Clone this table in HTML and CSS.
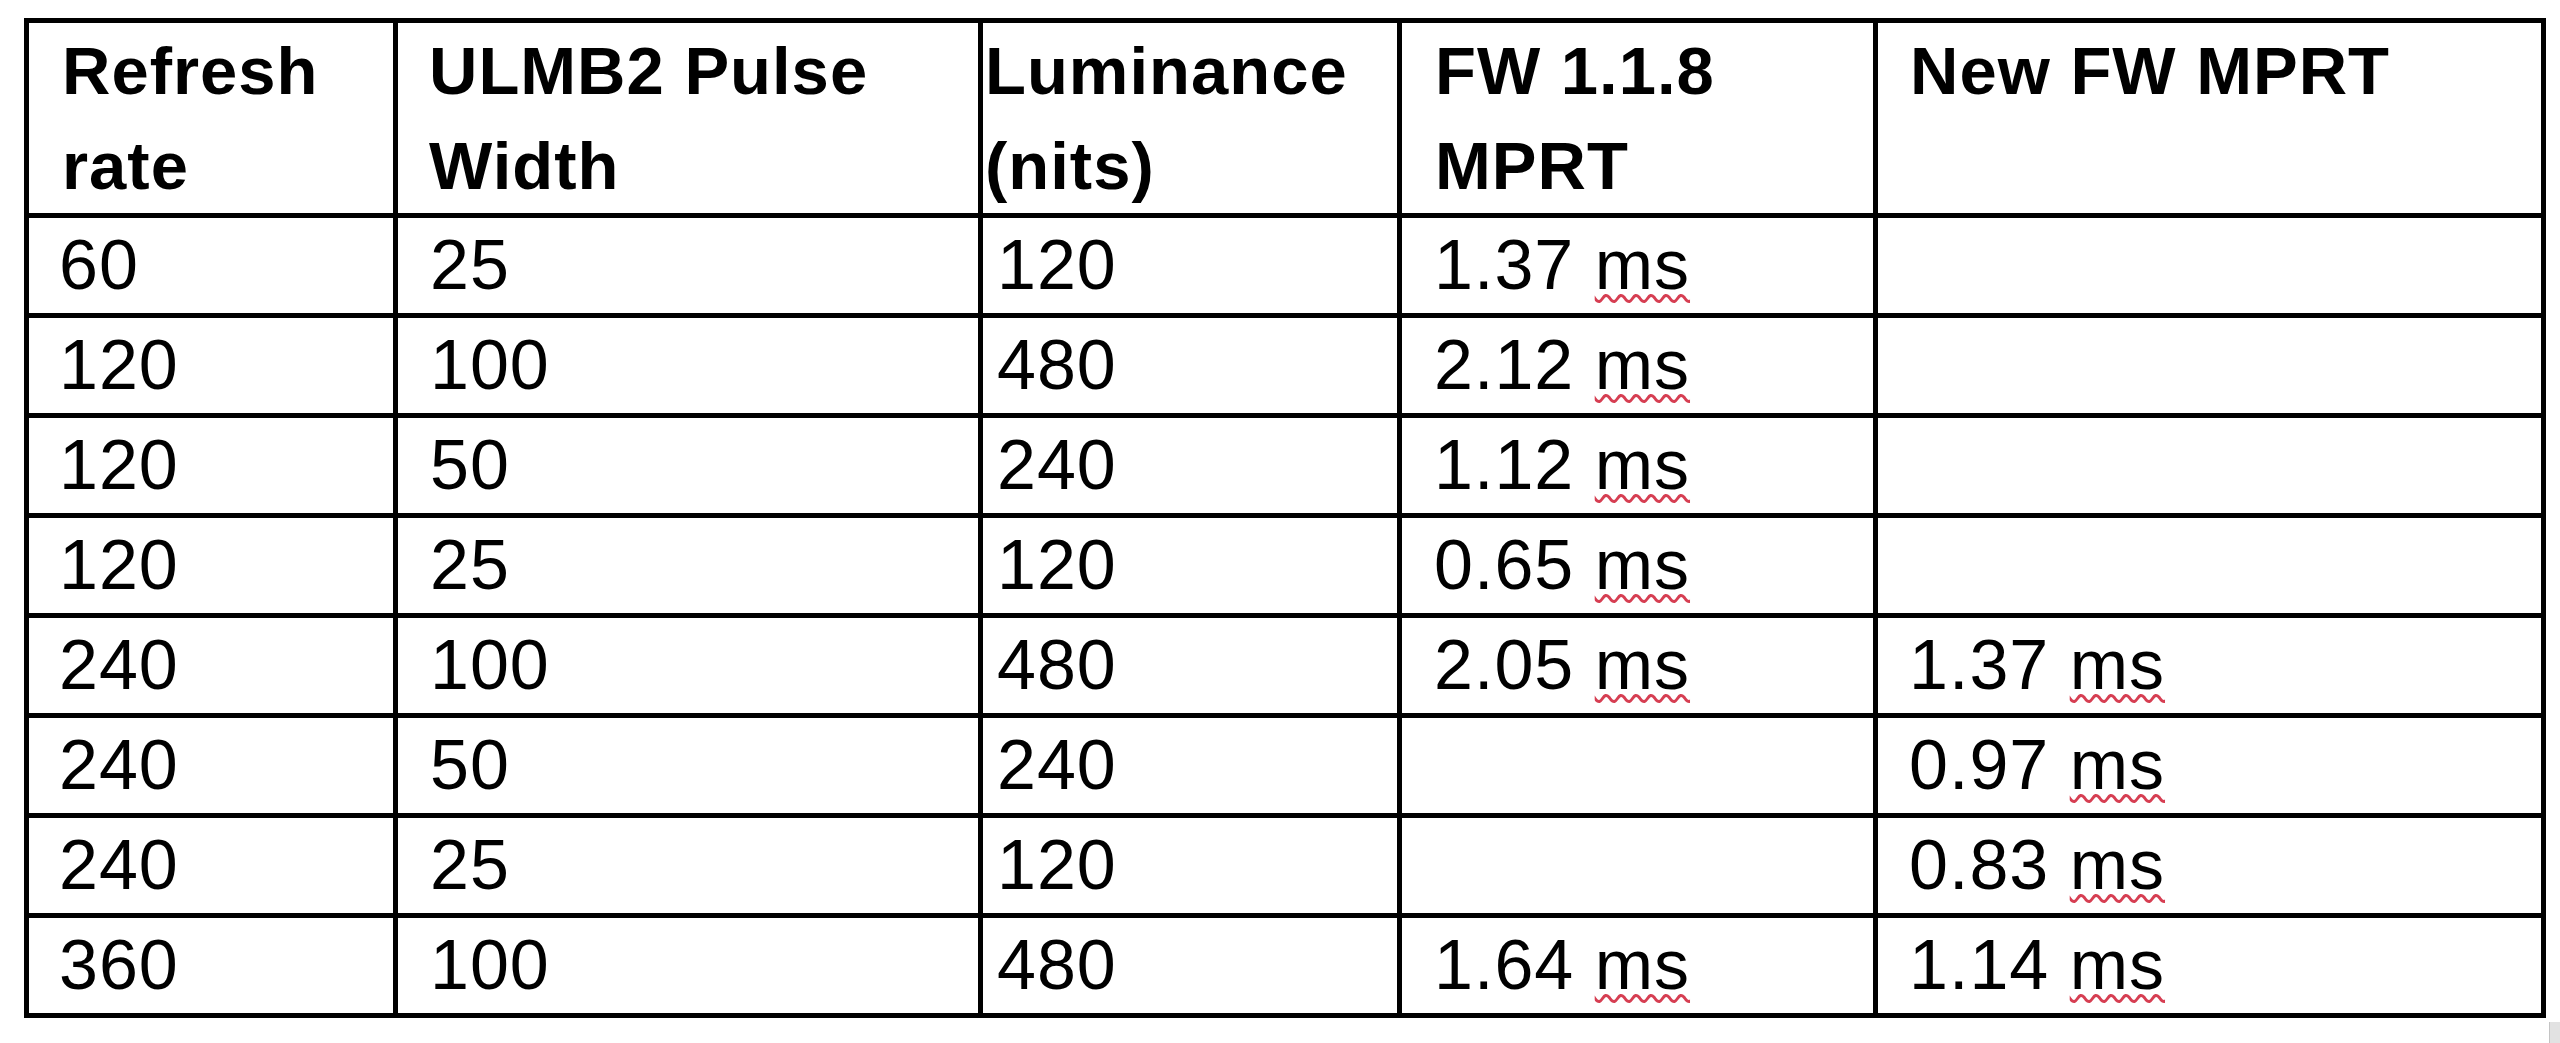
FILE: index.html
```html
<!DOCTYPE html>
<html lang="en">
<head>
<meta charset="utf-8">
<title>ULMB2 MPRT table</title>
<link rel="stylesheet" href="styles.css">
</head>
<body>
<main class="page">
  <table class="grid">
    <colgroup>
      <col class="c1"><col class="c2"><col class="c3"><col class="c4"><col class="c5">
    </colgroup>
    <thead>
      <tr>
        <th class="p1">Refresh<br>rate</th>
        <th class="p2">ULMB2 Pulse<br>Width</th>
        <th class="p3h">Luminance<br>(nits)</th>
        <th class="p4">FW 1.1.8<br>MPRT</th>
        <th class="p5">New FW MPRT</th>
      </tr>
    </thead>
    <tbody>
      <tr><td class="p1">60</td><td class="p2">25</td><td class="p3">120</td><td class="p4">1.37 <span class="sp">ms</span></td><td class="p5"></td></tr>
      <tr><td class="p1">120</td><td class="p2">100</td><td class="p3">480</td><td class="p4">2.12 <span class="sp">ms</span></td><td class="p5"></td></tr>
      <tr><td class="p1">120</td><td class="p2">50</td><td class="p3">240</td><td class="p4">1.12 <span class="sp">ms</span></td><td class="p5"></td></tr>
      <tr><td class="p1">120</td><td class="p2">25</td><td class="p3">120</td><td class="p4">0.65 <span class="sp">ms</span></td><td class="p5"></td></tr>
      <tr><td class="p1">240</td><td class="p2">100</td><td class="p3">480</td><td class="p4">2.05 <span class="sp">ms</span></td><td class="p5">1.37 <span class="sp">ms</span></td></tr>
      <tr><td class="p1">240</td><td class="p2">50</td><td class="p3">240</td><td class="p4"></td><td class="p5">0.97 <span class="sp">ms</span></td></tr>
      <tr><td class="p1">240</td><td class="p2">25</td><td class="p3">120</td><td class="p4"></td><td class="p5">0.83 <span class="sp">ms</span></td></tr>
      <tr><td class="p1">360</td><td class="p2">100</td><td class="p3">480</td><td class="p4">1.64 <span class="sp">ms</span></td><td class="p5">1.14 <span class="sp">ms</span></td></tr>
    </tbody>
  </table>
  <div class="corner"></div>
</main>
</body>
</html>
```

FILE: styles.css
```css
html, body {
  margin: 0;
  padding: 0;
  background: #ffffff;
}

body {
  width: 2560px;
  height: 1043px;
  overflow: hidden;
  font-family: "Liberation Sans", Arial, sans-serif;
  color: #000;
}

.page {
  position: relative;
  width: 2560px;
  height: 1043px;
  padding: 18px 0 0 24px;
  box-sizing: border-box;
}

.grid {
  border-collapse: separate;
  border-spacing: 0;
  table-layout: fixed;
  width: 2522px;
  border-top: 5px solid #000;
  border-left: 5px solid #000;
}

.c1 { width: 369px; }
.c2 { width: 585px; }
.c3 { width: 419px; }
.c4 { width: 476px; }
.c5 { width: 668px; }

.grid th,
.grid td {
  border-right: 5px solid #000;
  border-bottom: 5px solid #000;
  padding: 0;
  text-align: left;
  vertical-align: top;
  white-space: nowrap;
  overflow: hidden;
}

.grid th {
  font-weight: 700;
  font-size: 67px;
  letter-spacing: 1px;
  line-height: 95px;
  height: 190px;
}

.grid td {
  font-weight: 400;
  font-size: 70px;
  letter-spacing: 1px;
  line-height: 95px;
  height: 95px;
}

.p1 { padding-left: 33px !important; }
.p2 { padding-left: 31px !important; }
.p3h { padding-left: 2px !important; }
.p3 { padding-left: 14px !important; }
.p4 { padding-left: 33px !important; }
.p5 { padding-left: 32px !important; }

.grid td.p1 { padding-left: 30px !important; }
.grid td.p2 { padding-left: 32px !important; }
.grid td.p4 { padding-left: 32px !important; }
.grid td.p5 { padding-left: 31px !important; }

.sp {
  text-decoration-line: underline;
  text-decoration-style: wavy;
  text-decoration-color: #d63e52;
  text-decoration-thickness: 3px;
  text-underline-offset: 5px;
}

.corner {
  position: absolute;
  right: 0;
  bottom: 0;
  width: 10px;
  height: 21px;
  background: #e2e2e2;
  border-left: 1px solid #c4c4c4;
}
```
